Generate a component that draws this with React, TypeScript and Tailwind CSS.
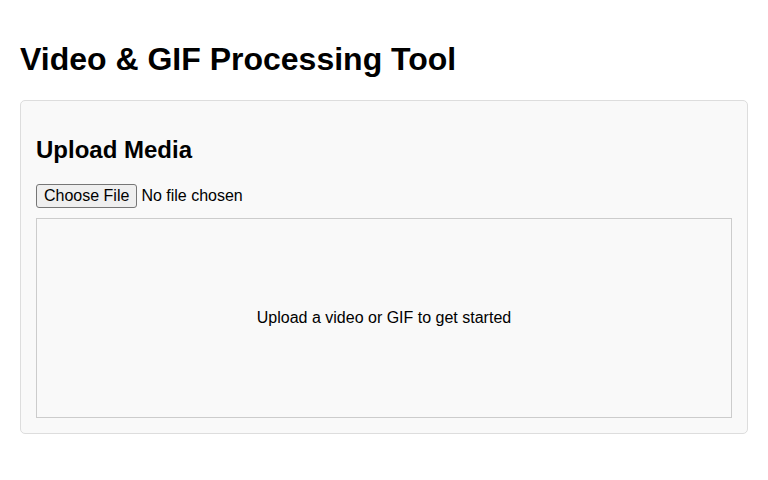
import React from "react";

export default function App() {
  return (
    <div className="min-h-[480px] bg-white p-5 text-black" style={{ fontFamily: '"Liberation Sans", Arial, sans-serif' }}>
      <h1 className="my-[21.44px] text-[32px] font-bold leading-[37px]">Video &amp; GIF Processing Tool</h1>
      <div className="rounded-[5px] border border-[#dddddd] bg-[#f9f9f9] p-[15px]">
        <h2 className="my-[19.92px] text-[24px] font-bold leading-[28px]">Upload Media</h2>
        <input
          type="file"
          accept="video/*,image/gif"
          className="block h-6 text-[16px] leading-[18px] file:mr-[4px] file:h-6 file:rounded-[3px] file:border file:border-solid file:border-[#767676] file:bg-[#efefef] file:px-[7px] file:text-[16px] file:text-black"
        />
        <div className="mt-[10px] flex h-[200px] items-center justify-center border border-[#cccccc] bg-[#f9f9f9] text-[16px]">
          Upload a video or GIF to get started
        </div>
      </div>
    </div>
  );
}
